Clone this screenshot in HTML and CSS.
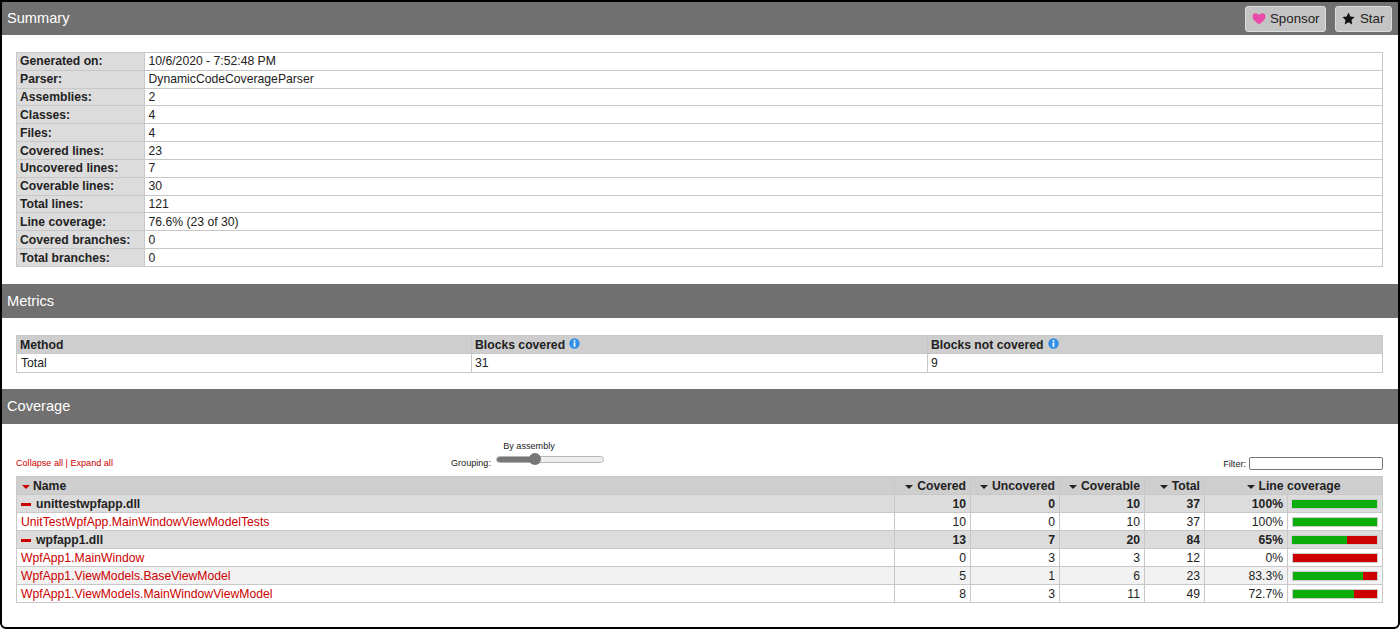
FILE: index.html
```html
<!DOCTYPE html>
<html lang="en">
<head>
<meta charset="utf-8">
<title>Summary - Coverage Report</title>
<link rel="stylesheet" href="styles.css">
</head>
<body>
<div class="page">
  <header class="bar bar-summary">
    <h1>Summary</h1>
    <div class="actions">
      <a class="btn btn-sponsor"><svg class="btn-icon" width="14" height="13" viewBox="0 0 16 14"><path fill="#ea4aaa" d="M8 13.600C3.200 10 .6 7.600.6 4.600.6 2.400 2.200 1 4.100 1c1.600 0 3 .9 3.900 2.300C8.900 1.900 10.300 1 11.900 1c1.900 0 3.500 1.400 3.500 3.600 0 3-2.600 5.400-7.400 9z"/></svg>Sponsor</a>
      <a class="btn btn-star"><svg class="btn-icon" width="13" height="13" viewBox="0 0 14 14"><path fill="#111" d="M7 .6l2 4.300 4.600.6-3.400 3.200.9 4.700L7 11.100l-4.100 2.300.9-4.700L.4 5.500 5 4.900z"/></svg>Star</a>
    </div>
  </header>
  <section class="content content-summary">
    <table class="info">
      <tbody>
        <tr><th>Generated on:</th><td>10/6/2020 - 7:52:48 PM</td></tr>
        <tr><th>Parser:</th><td>DynamicCodeCoverageParser</td></tr>
        <tr><th>Assemblies:</th><td>2</td></tr>
        <tr><th>Classes:</th><td>4</td></tr>
        <tr><th>Files:</th><td>4</td></tr>
        <tr><th>Covered lines:</th><td>23</td></tr>
        <tr><th>Uncovered lines:</th><td>7</td></tr>
        <tr><th>Coverable lines:</th><td>30</td></tr>
        <tr><th>Total lines:</th><td>121</td></tr>
        <tr><th>Line coverage:</th><td>76.6% (23 of 30)</td></tr>
        <tr><th>Covered branches:</th><td>0</td></tr>
        <tr><th>Total branches:</th><td>0</td></tr>
      </tbody>
    </table>
  </section>
  <header class="bar bar-metrics"><h1>Metrics</h1></header>
  <section class="content content-metrics">
    <table class="metrics">
      <colgroup><col class="m1"><col class="m2"><col></colgroup>
      <thead>
        <tr>
          <th>Method</th>
          <th>Blocks covered <svg class="info-icon" width="11" height="11" viewBox="0 0 11 11"><circle cx="5.500" cy="5.500" r="5.200" fill="#2f8fe8"/><rect x="4.600" y="4.500" width="1.800" height="4.300" fill="#fff"/><rect x="4.600" y="2.100" width="1.800" height="1.600" fill="#fff"/></svg></th>
          <th>Blocks not covered <svg class="info-icon" width="11" height="11" viewBox="0 0 11 11"><circle cx="5.500" cy="5.500" r="5.200" fill="#2f8fe8"/><rect x="4.600" y="4.500" width="1.800" height="4.300" fill="#fff"/><rect x="4.600" y="2.100" width="1.800" height="1.600" fill="#fff"/></svg></th>
        </tr>
      </thead>
      <tbody>
        <tr><td>Total</td><td>31</td><td>9</td></tr>
      </tbody>
    </table>
  </section>
  <header class="bar bar-coverage"><h1>Coverage</h1></header>
  <section class="content content-coverage">
    <div class="controls">
      <div class="links"><a>Collapse all</a> | <a>Expand all</a></div>
      <div class="grouping">
        <div class="group-name">By assembly</div>
        <div class="group-row"><span class="group-label">Grouping:</span><div class="slider"><div class="slider-fill"></div><div class="slider-knob"></div></div></div>
      </div>
      <div class="filter"><span>Filter:</span><input type="text" class="filter-input"></div>
    </div>
    <table class="cov">
      <colgroup><col class="c-name"><col class="c-covered"><col class="c-uncovered"><col class="c-coverable"><col class="c-total"><col class="c-pct"><col class="c-bar"></colgroup>
      <thead>
        <tr>
          <th class="name-head"><i class="caret caret-red"></i>Name</th>
          <th class="r"><i class="caret"></i>Covered</th>
          <th class="r"><i class="caret"></i>Uncovered</th>
          <th class="r"><i class="caret"></i>Coverable</th>
          <th class="r"><i class="caret"></i>Total</th>
          <th class="line-head" colspan="2"><i class="caret"></i>Line coverage</th>
        </tr>
      </thead>
      <tbody>
        <tr class="group"><th><i class="minus"></i>unittestwpfapp.dll</th><th class="r">10</th><th class="r">0</th><th class="r">10</th><th class="r">37</th><th class="r">100%</th><th class="barcell"><div class="cbar"><div class="green" style="width:100%"></div></div></th></tr>
        <tr><td><a>UnitTestWpfApp.MainWindowViewModelTests</a></td><td class="r">10</td><td class="r">0</td><td class="r">10</td><td class="r">37</td><td class="r">100%</td><td class="barcell"><div class="cbar"><div class="green" style="width:100%"></div></div></td></tr>
        <tr class="group"><th><i class="minus"></i>wpfapp1.dll</th><th class="r">13</th><th class="r">7</th><th class="r">20</th><th class="r">84</th><th class="r">65%</th><th class="barcell"><div class="cbar"><div class="green" style="width:65%"></div></div></th></tr>
        <tr><td><a>WpfApp1.MainWindow</a></td><td class="r">0</td><td class="r">3</td><td class="r">3</td><td class="r">12</td><td class="r">0%</td><td class="barcell"><div class="cbar"></div></td></tr>
        <tr class="alt"><td><a>WpfApp1.ViewModels.BaseViewModel</a></td><td class="r">5</td><td class="r">1</td><td class="r">6</td><td class="r">23</td><td class="r">83.3%</td><td class="barcell"><div class="cbar"><div class="green" style="width:83.3%"></div></div></td></tr>
        <tr><td><a>WpfApp1.ViewModels.MainWindowViewModel</a></td><td class="r">8</td><td class="r">3</td><td class="r">11</td><td class="r">49</td><td class="r">72.7%</td><td class="barcell"><div class="cbar"><div class="green" style="width:72.7%"></div></div></td></tr>
      </tbody>
    </table>
  </section>
</div>
</body>
</html>
```

FILE: styles.css
```css
* { box-sizing: border-box; }
html, body { margin: 0; padding: 0; background: #fff; }
body { font-family: "Liberation Sans", Arial, sans-serif; font-size: 12.2px; color: #222; overflow: hidden; }
.page { width: 1400px; height: 629px; border: 2px solid #000; border-radius: 0 0 6px 6px; background: #fff; overflow: hidden; }
.bar { background: #707070; color: #fff; display: flex; align-items: center; justify-content: space-between; padding-left: 5px; }
.bar h1 { margin: 0 0 1px; font-size: 14.6px; line-height: 17px; font-weight: normal; }
.bar-summary { height: 33px; }
.bar-metrics { height: 34px; }
.bar-metrics h1 { margin: 0; }
.bar-coverage { height: 35px; }
.actions { display: flex; gap: 9px; padding-right: 6px; }
.btn { display: flex; align-items: center; gap: 5px; height: 26px; padding: 0 6px; background: #c4c4c4; border: 1px solid #ddd; border-radius: 3px; color: #222; font-size: 13.3px; }
.btn-icon { flex-shrink: 0; }
.btn-sponsor { width: 81px; gap: 4px; }
.btn-star { width: 57px; }
.content { padding: 17px 15px 0 14px; }
.content-summary { height: 249px; }
.content-metrics { height: 71px; }
.content-coverage { padding-top: 17px; }
table { border-collapse: collapse; width: 1367px; table-layout: fixed; }
th, td { border: 1px solid #c8c8c8; height: 18px; padding: 0 3px; font-size: 12.2px; line-height: 15px; text-align: left; font-weight: normal; white-space: nowrap; overflow: hidden; }
.info th { width: 127.5px; height: 17.83px; padding-top: 1px; background: #dcdcdc; font-weight: bold; }
.info td { height: 17.83px; padding: 1px 3px 0 4px; }
.metrics th { padding-top: 1px; background: #cecece; font-weight: bold; }
.metrics td { height: 18.5px; padding-top: 1px; }
.metrics td:first-child { padding-left: 4px; }
.m1 { width: 455px; }
.m2 { width: 456px; }
.info-icon { vertical-align: 0; margin-left: 1px; }
.controls { display: flex; height: 35px; font-size: 9.1px; }
.links { width: 435px; padding-top: 17px; color: #c00; line-height: 11px; }
.links a { color: #c00; }
.grouping { width: 180px; }
.group-name { width: 90px; margin-left: 33px; height: 15px; text-align: center; line-height: 11px; }
.group-row { display: flex; align-items: flex-start; gap: 5px; }
.group-label { margin-top: 2px; line-height: 11px; }
.slider { position: relative; width: 108px; height: 7px; background: #eee; border: 1px solid #b5b5b5; border-radius: 4px; }
.slider-fill { width: 38px; height: 100%; background: #777; border-radius: 3px 0 0 3px; }
.slider-knob { position: absolute; left: 32px; top: -4px; width: 12px; height: 12px; background: #777; border-radius: 50%; }
.filter { display: flex; align-items: center; gap: 3px; height: 13px; margin: 16px 0 0 auto; }
.filter-input { width: 134px; height: 13px; padding: 0; border: 1px solid #767676; border-radius: 2px; background: #fff; }
.cov th, .cov td { height: 17.85px; padding: 2px 4px 0; }
.cov thead th { height: 18px; background: #cecece; font-weight: bold; }
.cov thead th.r { text-align: right; }
.cov .line-head { text-align: center; }
.group th { background: #dcdcdc; font-weight: bold; }
.alt td { background: #f2f2f2; }
.cov td a { color: #c00; }
.cov .r { text-align: right; }
.c-covered { width: 76px; }
.c-uncovered { width: 89px; }
.c-coverable { width: 85px; }
.c-total { width: 60px; }
.c-pct { width: 83px; }
.c-bar { width: 95px; }
.caret { display: inline-block; width: 0; height: 0; border-left: 4px solid transparent; border-right: 4px solid transparent; border-top: 4px solid #222; margin-right: 4px; vertical-align: 1px; }
.caret-red { border-top-color: #c00; margin-right: 3px; }
.name-head { padding-left: 5px !important; }
.minus { display: inline-block; width: 10px; height: 3px; background: #c00; margin-right: 5px; vertical-align: 2px; }
.cov .barcell { padding: 0 4px 0 4px; }
.cbar { height: 10px; background: #c00; border: 1px solid #ccc; }
.group .cbar { margin-left: -1px; }
.green { height: 100%; background: #0aad0a; }
```
